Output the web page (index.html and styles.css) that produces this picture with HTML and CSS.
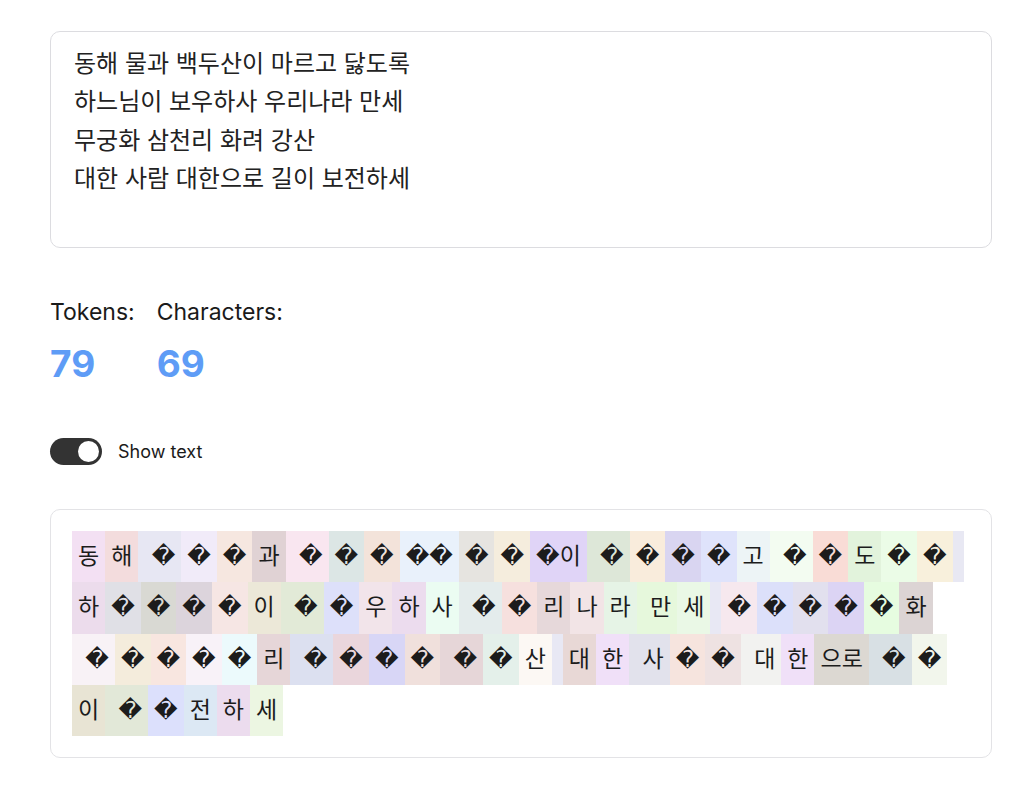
FILE: index.html
```html
<!DOCTYPE html>
<html lang="ko">
<head>
  <meta charset="UTF-8">
  <title>Tokenizer</title>
  <link rel="stylesheet" href="styles.css">
</head>
<body>
  <div class="page">
    <textarea class="input" spellcheck="false">동해 물과 백두산이 마르고 닳도록
하느님이 보우하사 우리나라 만세
무궁화 삼천리 화려 강산
대한 사람 대한으로 길이 보전하세</textarea>

    <div class="stats">
      <div class="stat">
        <div class="stat-label">Tokens:</div>
        <div class="stat-value">79</div>
      </div>
      <div class="stat">
        <div class="stat-label">Characters:</div>
        <div class="stat-value">69</div>
      </div>
    </div>

    <label class="toggle-row">
      <span class="toggle"><span class="knob"></span></span>
      <span class="toggle-label">Show text</span>
    </label>

    <div class="tokens">
      <span class="tok" style="background:#f3e0f3">동</span><span class="tok" style="background:#f3dcdd">해</span><span class="tok" style="background:#e7e7f3"> �</span><span class="tok" style="background:#f1ebf9">�</span><span class="tok" style="background:#f6e7e0">�</span><span class="tok" style="background:#e0d2d4">과</span><span class="tok" style="background:#f9e6f0"> �</span><span class="tok" style="background:#dce6e5">�</span><span class="tok" style="background:#f3e3da">�</span><span class="tok" style="background:#e9f1fb">��</span><span class="tok" style="background:#e6e4e0">�</span><span class="tok" style="background:#f5eddd">�</span><span class="tok" style="background:#e0d4f7">�이</span><span class="tok" style="background:#dde7d8"> �</span><span class="tok" style="background:#f9ecdc">�</span><span class="tok" style="background:#d9d5f1">�</span><span class="tok" style="background:#dfe3fb">�</span><span class="tok" style="background:#edf4f6">고</span><span class="tok" style="background:#f3fcf1"> �</span><span class="tok" style="background:#f9dcd6">�</span><span class="tok" style="background:#e2f3dc">도</span><span class="tok" style="background:#ebfce7">�</span><span class="tok" style="background:#f8f0dc">�</span><span class="tok nl" style="background:#e8e8f3"></span><span class="tok" style="background:#ecdcec">하</span><span class="tok" style="background:#e0e0e6">�</span><span class="tok" style="background:#d9d9d3">�</span><span class="tok" style="background:#dcd4dc">�</span><span class="tok" style="background:#f6e6e4">�</span><span class="tok" style="background:#ece8d8">이</span><span class="tok" style="background:#e2ead7"> �</span><span class="tok" style="background:#dde0fa">�</span><span class="tok" style="background:#f2e4ea">우</span><span class="tok" style="background:#ecdcee">하</span><span class="tok" style="background:#ebfcf2">사</span><span class="tok" style="background:#e4ecec"> �</span><span class="tok" style="background:#f6e0de">�</span><span class="tok" style="background:#e6d8da">리</span><span class="tok" style="background:#f2e4e6">나</span><span class="tok" style="background:#e6f4e6">라</span><span class="tok" style="background:#e6f8dc"> 만</span><span class="tok" style="background:#eaf8e6">세</span><span class="tok nl" style="background:#e8e8f4"></span><span class="tok" style="background:#f6e8ee">�</span><span class="tok" style="background:#dce0fa">�</span><span class="tok" style="background:#e2e0ee">�</span><span class="tok" style="background:#dcd4f4">�</span><span class="tok" style="background:#e6fce0">�</span><span class="tok" style="background:#dcd4d4">화</span><span class="tok" style="background:#f8f2f6"> �</span><span class="tok" style="background:#f4ecdc">�</span><span class="tok" style="background:#f8e6e0">�</span><span class="tok" style="background:#f8f2f8">�</span><span class="tok" style="background:#ecfafc">�</span><span class="tok" style="background:#e6d6d8">리</span><span class="tok" style="background:#dce0f0"> �</span><span class="tok" style="background:#ead6dc">�</span><span class="tok" style="background:#d8d6f6">�</span><span class="tok" style="background:#f0e0dc">�</span><span class="tok" style="background:#e6d6d8"> �</span><span class="tok" style="background:#e4f0ea">�</span><span class="tok" style="background:#fcf8f4">산</span><span class="tok nl" style="background:#e8e8f4"></span><span class="tok" style="background:#e8d8d6">대</span><span class="tok" style="background:#f0e0f8">한</span><span class="tok" style="background:#e2e2ec"> 사</span><span class="tok" style="background:#f6e4de">�</span><span class="tok" style="background:#eee2e2">�</span><span class="tok" style="background:#f2f2f0"> 대</span><span class="tok" style="background:#f0e0f8">한</span><span class="tok" style="background:#dcd8d2">으로</span><span class="tok" style="background:#d8e0e4"> �</span><span class="tok" style="background:#f2f6ec">�</span><span class="tok" style="background:#e8e4d4">이</span><span class="tok" style="background:#e2e8d8"> �</span><span class="tok" style="background:#dce0fc">�</span><span class="tok" style="background:#dce8f4">전</span><span class="tok" style="background:#ecdcee">하</span><span class="tok" style="background:#ecf6e2">세</span>
    </div>
  </div>
</body>
</html>
```

FILE: styles.css
```css
body {
  margin: 0;
  background: #fff;
  color: #202123;
  font-family: Inter, "Noto Sans", sans-serif;
}

.page {
  width: 942px;
  padding: 31px 0 30px 50px;
}

.input {
  display: block;
  box-sizing: border-box;
  width: 100%;
  height: 217px;
  margin: 0;
  padding: 11px 23px;
  border: 1px solid #dcdce0;
  border-radius: 10px;
  resize: none;
  outline: none;
  font-family: "Noto Sans CJK KR", sans-serif;
  font-size: 24px;
  line-height: 38.4px;
  color: #222;
}

.stats {
  display: flex;
  gap: 22px;
  margin-top: 50px;
}

.stat-label {
  font-size: 23px;
  line-height: 28px;
  color: #1a1a1a;
}

.stat-value {
  margin-top: 15px;
  font-size: 37px;
  font-weight: 700;
  line-height: 46px;
  color: #5e9cf6;
}

.toggle-row {
  display: flex;
  align-items: center;
  gap: 16px;
  margin-top: 51px;
}

.toggle {
  display: flex;
  justify-content: flex-end;
  align-items: center;
  box-sizing: border-box;
  width: 52px;
  height: 27px;
  padding: 0 3px;
  border-radius: 14px;
  background: #333;
}

.knob {
  width: 21px;
  height: 21px;
  border-radius: 50%;
  background: #fff;
}

.toggle-label {
  font-size: 18px;
  color: #1a1a1a;
}

.tokens {
  display: flex;
  flex-wrap: wrap;
  margin-top: 44px;
  padding: 21px 21px 21px;
  border: 1px solid #e3e3e6;
  border-radius: 10px;
}

.tok {
  padding: 0 6px;
  white-space: pre;
  font-family: "DejaVu Sans", "Noto Sans CJK KR", sans-serif;
  font-size: 23px;
  line-height: 51.25px;
  color: #1c1c1c;
}

.tok.nl {
  width: 11px;
  padding: 0;
}
```
